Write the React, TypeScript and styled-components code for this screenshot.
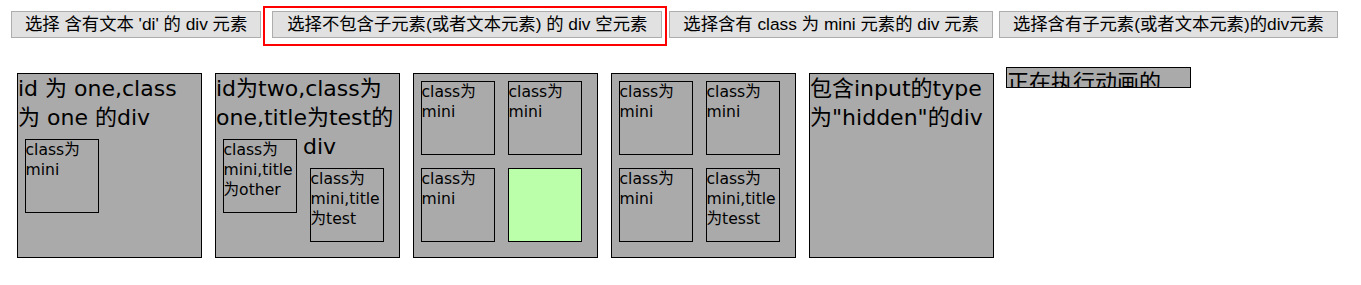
import React from "react";
import styled, { createGlobalStyle } from "styled-components";

const GlobalStyle = createGlobalStyle`
  body {
    margin: 0;
    background: #fff;
    color: #000;
    font-family: "DejaVu Sans", "Noto Sans CJK SC", sans-serif;
  }
`;

const Page = styled.div`
  padding: 6px 10px 10px;
`;

const Toolbar = styled.div`
  display: flex;
  align-items: flex-start;
  padding-left: 1px;
`;

const ActionButton = styled.button`
  flex: none;
  margin: 5px 6px 0 0;
  padding: 2px 13px;
  font-family: "Liberation Sans", "Noto Sans CJK SC", sans-serif;
  font-size: 17.33px;
  line-height: 21px;
  color: #000;
  background: #e1e1e1;
  border: 1px solid #adadad;
  border-radius: 0;
  white-space: nowrap;
`;

// red frame round the button that was clicked
const Marked = styled.div`
  display: flex;
  flex: none;
  margin: 0 2px -8px -4px;
  padding: 3px 3px 6px 7px;
  border: 2px solid #f00;

  & > ${ActionButton} {
    margin: 0;
    padding: 2px 14px;
  }
`;

const BoxRow = styled.div`
  display: flex;
  align-items: flex-start;
  margin-top: 28.5px;
  padding-left: 0.5px;
`;

const Box = styled.div`
  flex: none;
  width: 183px;
  height: 183px;
  margin: 6.5px;
  background: #aaa;
  border: 1px solid #000;
  font-size: 22px;
  line-height: 29px;
`;

const Mini = styled.div<{ $empty?: boolean }>`
  float: left;
  width: 72px;
  height: 72px;
  margin: 6.5px;
  background: ${p => (p.$empty ? "#bbffaa" : "#aaa")};
  border: 1px solid #000;
  font-size: 15.6px;
  line-height: 20px;
`;

const Mover = styled.div`
  flex: none;
  width: 183px;
  height: 19px;
  margin: 0 6.5px 0 5.5px;
  overflow: hidden;
  background: #aaa;
  border: 1px solid #000;
  font-size: 22px;
  line-height: 29px;
`;

const App = () => {
  return (
    <Page>
      <GlobalStyle />
      <Toolbar>
        <ActionButton>选择 含有文本 'di' 的 div 元素</ActionButton>
        <Marked>
          <ActionButton>选择不包含子元素(或者文本元素) 的 div 空元素</ActionButton>
        </Marked>
        <ActionButton>选择含有 class 为 mini 元素的 div 元素</ActionButton>
        <ActionButton>选择含有子元素(或者文本元素)的div元素</ActionButton>
      </Toolbar>
      <BoxRow>
        <Box id="one">
          id 为 one,class 为 one 的div
          <Mini>class为mini</Mini>
        </Box>
        <Box id="two" title="test">
          id为two,class为one,title为test的div
          <Mini title="other">class为mini,title为other</Mini>
          <Mini title="test">class为mini,title为test</Mini>
        </Box>
        <Box>
          <Mini>class为mini</Mini>
          <Mini>class为mini</Mini>
          <Mini>class为mini</Mini>
          <Mini $empty />
        </Box>
        <Box>
          <Mini>class为mini</Mini>
          <Mini>class为mini</Mini>
          <Mini>class为mini</Mini>
          <Mini title="tesst">class为mini,title为tesst</Mini>
        </Box>
        <Box>
          包含input的type为"hidden"的div
          <input type="hidden" size={8} />
        </Box>
        <Mover id="mover">正在执行动画的div元素.</Mover>
      </BoxRow>
    </Page>
  );
};

export default App;
